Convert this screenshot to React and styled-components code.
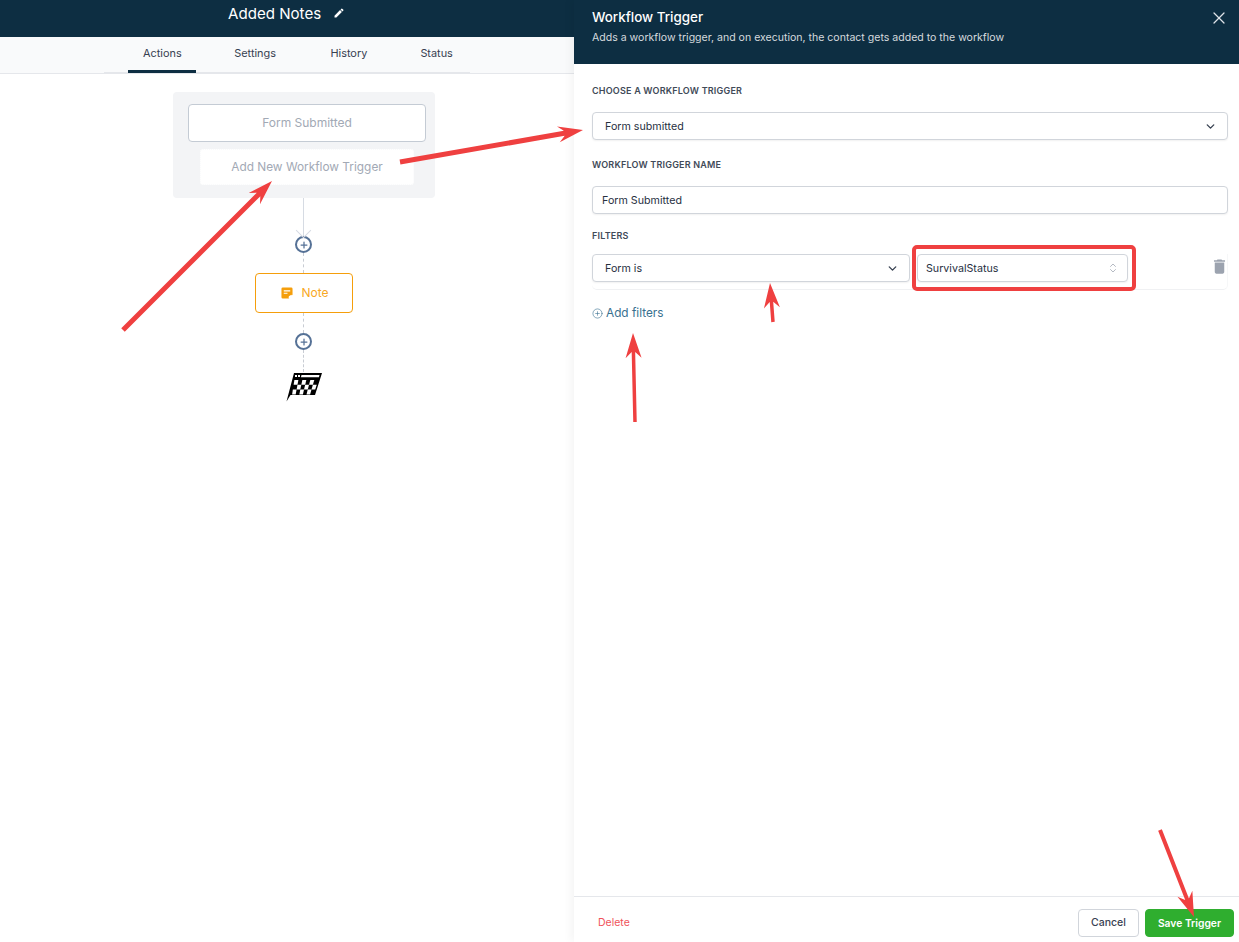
import React from "react";
import styled, { createGlobalStyle } from "styled-components";
import { MdEdit, MdDelete } from "react-icons/md";
import { X, ChevronDown, ChevronsUpDown, Plus, CirclePlus } from "lucide-react";

const Global = createGlobalStyle`
  html, body { margin: 0; padding: 0; background: #fff; }
  * { box-sizing: border-box; }
  body { font-family: Inter, "Liberation Sans", sans-serif; }
`;

const Page = styled.div`
  position: relative;
  display: flex;
  width: 1239px;
  height: 942px;
  overflow: hidden;
  background: #fff;
`;

const Builder = styled.div`
  width: 574px;
  flex: none;
  display: flex;
  flex-direction: column;
`;

const TopBar = styled.header`
  height: 37px;
  background: #0d2e42;
  display: flex;
  align-items: flex-start;
  padding: 5px 0 0 228px;
  gap: 12px;
  color: #fff;
`;

const WorkflowName = styled.h1`
  margin: 0;
  font-size: 15.1px;
  line-height: 18px;
  font-weight: 400;
  color: #fff;
`;

const EditIcon = styled(MdEdit)`
  width: 12px;
  height: 12px;
  margin-top: 2px;
  color: #fff;
`;

const TabBar = styled.nav`
  height: 37px;
  background: #f9fafb;
  border-bottom: 1px solid #e5e7eb;
  display: flex;
  justify-content: center;
`;

const TabTrack = styled.div`
  width: 366px;
  display: flex;
  padding-left: 24px;
  border-bottom: 1px solid #e5e7eb;
`;

const Tab = styled.a`
  width: ${(p) => p.$w}px;
  margin-right: ${(p) => p.$gap || 0}px;
  height: 36px;
  display: flex;
  align-items: center;
  justify-content: center;
  font-size: 10.9px;
  font-weight: 400;
  padding: 0 0 2px 1px;
  color: #374151;
  border-bottom: 3px solid ${(p) => (p.$active ? "#0d2e42" : "transparent")};
`;

const Canvas = styled.main`
  flex: 1;
  display: flex;
  flex-direction: column;
  align-items: center;
  padding: 18px 0 0 33px;
`;

const TriggerCard = styled.section`
  width: 262px;
  height: 106px;
  margin-left: 1px;
  background: #f3f4f6;
  border-radius: 4px;
  padding: 12px 9px 0 15px;
  display: flex;
  flex-direction: column;
  align-items: stretch;
`;

const TriggerBox = styled.div`
  height: 38px;
  padding-bottom: 2px;
  background: #fff;
  border: 1px solid #c4cbd4;
  border-radius: 4px;
  display: flex;
  align-items: center;
  justify-content: center;
  font-size: 12px;
  color: #a2a9b5;
`;

const AddTrigger = styled.div`
  height: 36px;
  margin: 7px 12px 0 12px;
  background: #fff;
  border: 1px dotted #f9fafb;
  border-radius: 3px;
  display: flex;
  align-items: center;
  justify-content: center;
  font-size: 11.85px;
  color: #a2a9b5;
`;

const SolidLine = styled.div`
  position: relative;
  width: 1px;
  height: 38px;
  background: #d6dbe3;
  &::after {
    content: "";
    position: absolute;
    left: -5px;
    bottom: 0;
    width: 10px;
    height: 10px;
    border-right: 1px solid #d6dbe3;
    border-bottom: 1px solid #d6dbe3;
    transform: rotate(45deg);
  }
`;

const DashedLine = styled.div`
  width: 0;
  height: ${(p) => p.$h}px;
  border-left: 1px dashed #c8ccd3;
`;

const AddStep = styled.button`
  width: 17px;
  height: 17px;
  padding: 0;
  flex: none;
  border-radius: 50%;
  border: 2px solid #557196;
  background: #fff;
  display: flex;
  align-items: center;
  justify-content: center;
  color: #557196;
`;

const NoteNode = styled.div`
  width: 98px;
  height: 40px;
  margin-left: 1px;
  padding: 0 0 1px 2px;
  border: 1px solid #f59e0b;
  border-radius: 4px;
  background: #fff;
  display: flex;
  align-items: center;
  justify-content: center;
  gap: 8px;
  font-size: 12px;
  color: #f8a825;
`;

const Panel = styled.aside`
  flex: 1;
  display: flex;
  flex-direction: column;
  background: #fff;
  box-shadow: -4px 0 8px rgba(0, 0, 0, 0.04);
  z-index: 1;
`;

const PanelHead = styled.header`
  height: 64px;
  flex: none;
  background: #0d2e42;
  display: flex;
  justify-content: space-between;
  padding: 9px 10px 0 18px;
`;

const PanelTitle = styled.h2`
  margin: 0;
  font-size: 13.4px;
  line-height: 17px;
  font-weight: 500;
  color: #fff;
`;

const PanelSub = styled.p`
  margin: 5px 0 0;
  font-size: 10.55px;
  line-height: 14px;
  color: #d5dade;
`;

const CloseIcon = styled(X)`
  width: 20px;
  height: 20px;
  margin-top: -1px;
  stroke-width: 1.5;
  color: #dfe3e8;
`;

const PanelBody = styled.div`
  flex: 1;
  padding: 21px 11px 0 18px;
  display: flex;
  flex-direction: column;
`;

const FieldLabel = styled.label`
  display: block;
  font-size: 9px;
  line-height: 12px;
  font-weight: 600;
  letter-spacing: 0.2px;
  color: #414a58;
  margin-bottom: ${(p) => p.$mb}px;
`;

const Control = styled.div`
  height: 28px;
  width: ${(p) => (p.$w ? p.$w + "px" : "100%")};
  flex: none;
  background: #fff;
  border: 1px solid #d1d5db;
  border-radius: 4px;
  box-shadow: 0 1px 2px rgba(0, 0, 0, 0.06);
  display: flex;
  align-items: center;
  justify-content: space-between;
  padding: 0 ${(p) => p.$pr ?? 10}px 0 ${(p) => p.$pl ?? 12}px;
  font-size: 10.7px;
  color: #27303f;
  margin-bottom: ${(p) => p.$mb || 0}px;
`;

const Chevron = styled(ChevronDown)`
  width: 13px;
  height: 13px;
  stroke-width: 2.5;
  color: #374151;
`;

const UpDown = styled(ChevronsUpDown)`
  width: 12px;
  height: 14px;
  stroke-width: 1.5;
  color: #9ca3af;
`;

const FilterRow = styled.div`
  display: flex;
  align-items: flex-start;
  height: 36px;
  border-bottom: 1px solid #f0f1f3;
  border-right: 1px solid #f6f7f8;
  border-radius: 0 0 5px 5px;
  gap: 7px;
`;

const TrashButton = styled(MdDelete)`
  width: 19px;
  height: 19px;
  margin: 3px -2px 0 auto;
  flex: none;
  color: #9ca3af;
`;

const AddFilter = styled.a`
  display: flex;
  align-items: center;
  gap: 3px;
  margin-top: 16px;
  font-size: 11.8px;
  line-height: 14px;
  color: #38708f;
`;

const PanelFoot = styled.footer`
  height: 46px;
  flex: none;
  border-top: 1px solid #e5e7eb;
  display: flex;
  align-items: center;
  justify-content: space-between;
  padding: 6px 5px 0 24px;
`;

const DeleteLink = styled.a`
  font-size: 10.5px;
  color: #f0525a;
`;

const FootActions = styled.div`
  display: flex;
  gap: 6px;
`;

const FootButton = styled.button`
  height: 28px;
  width: ${(p) => p.$w}px;
  border-radius: 4px;
  padding: 0;
  font: ${(p) => (p.$primary ? 600 : 500)} ${(p) => (p.$primary ? 10.3 : 10.5)}px Inter, sans-serif;
  color: ${(p) => (p.$primary ? "#fff" : "#374151")};
  background: ${(p) => (p.$primary ? "#2fae2f" : "#fff")};
  border: 1px solid ${(p) => (p.$primary ? "#2fae2f" : "#d1d5db")};
`;

const FlagGraphic = styled.svg`
  flex: none;
  margin-left: 1px;
`;

const Overlay = styled.svg`
  position: absolute;
  left: 0;
  top: 0;
  z-index: 5;
  pointer-events: none;
`;

const ARROW_RED = "#ef4040";

function Arrow({ x1, y1, x2, y2, w = 4 }) {
  const dx = x2 - x1;
  const dy = y2 - y1;
  const len = Math.hypot(dx, dy);
  const ux = dx / len;
  const uy = dy / len;
  const nx = -uy;
  const ny = ux;
  const hl = 25;
  const hw = 8;
  const notch = 19;
  const pt = (a, b) => `${x1 + ux * a + nx * b},${y1 + uy * a + ny * b}`;
  const points = [
    pt(0, -w / 2),
    pt(len - notch, -w / 2),
    pt(len - hl, -hw),
    pt(len, 0),
    pt(len - hl, hw),
    pt(len - notch, w / 2),
    pt(0, w / 2),
  ].join(" ");
  return <polygon points={points} fill={ARROW_RED} />;
}

function NoteIcon() {
  return (
    <svg width="12" height="12" viewBox="0 0 13 13">
      <path d="M2 0.5h9a1.5 1.5 0 0 1 1.5 1.5v6.5l-4 4H2A1.5 1.5 0 0 1 .5 11V2A1.5 1.5 0 0 1 2 .5z" fill="#f59e0b" />
      <path d="M3 4.2h7M3 6.7h4" stroke="#fff" strokeWidth="1.1" />
      <path d="M8.2 12.2l.3-2.2 2.7-1.5 1 1.2-2.4 2.2z" fill="#fff" />
    </svg>
  );
}

function FlagIcon() {
  const edge = (y) => {
    const t = (y - 1) / 22;
    return [8 - 3.5 * t, 36 - 7 * t];
  };
  const cell = (r, c) => {
    const y0 = 8 + r * 4.8;
    const y1 = y0 + 4.8;
    const at = (y, k) => {
      const [l, rt] = edge(y);
      const w = (rt - l - 3) / 6;
      return l + 1.5 + k * w;
    };
    return `${at(y0, c)},${y0} ${at(y0, c + 1)},${y0} ${at(y1, c + 1)},${y1} ${at(y1, c)},${y1}`;
  };
  const cells = [];
  for (let r = 0; r < 3; r++) {
    for (let c = 0; c < 6; c++) {
      if ((r + c) % 2 === 0) cells.push(<polygon key={`${r}-${c}`} points={cell(r, c)} fill="#fff" />);
    }
  }
  return (
    <FlagGraphic width="37" height="30" viewBox="0 0 37 30">
      <path d="M8 1 L36 1 L29 23 L4.5 23 L0.5 29.5 Z" fill="#000" />
      <path d="M15.5 3h18l-.6 2.2H14.9z" fill="#fff" />
      <rect x="9" y="3" width="2" height="2" fill="#fff" />
      <rect x="12" y="3" width="2" height="2" fill="#fff" />
      {cells}
    </FlagGraphic>
  );
}

export default function App() {
  return (
    <Page>
      <Global />
      <Builder>
        <TopBar>
          <WorkflowName>Added Notes</WorkflowName>
          <EditIcon />
        </TopBar>
        <TabBar>
          <TabTrack>
            <Tab $w={68} $gap={25} $active>Actions</Tab>
            <Tab $w={68} $gap={26}>Settings</Tab>
            <Tab $w={68} $gap={20}>History</Tab>
            <Tab $w={68}>Status</Tab>
          </TabTrack>
        </TabBar>
        <Canvas>
          <TriggerCard>
            <TriggerBox>Form Submitted</TriggerBox>
            <AddTrigger>Add New Workflow Trigger</AddTrigger>
          </TriggerCard>
          <SolidLine />
          <AddStep><Plus size={10} strokeWidth={3} /></AddStep>
          <DashedLine $h={20} />
          <NoteNode><NoteIcon />Note</NoteNode>
          <DashedLine $h={20} />
          <AddStep><Plus size={10} strokeWidth={3} /></AddStep>
          <DashedLine $h={22} />
          <FlagIcon />
        </Canvas>
      </Builder>
      <Panel>
        <PanelHead>
          <div>
            <PanelTitle>Workflow Trigger</PanelTitle>
            <PanelSub>Adds a workflow trigger, and on execution, the contact gets added to the workflow</PanelSub>
          </div>
          <CloseIcon />
        </PanelHead>
        <PanelBody>
          <FieldLabel $mb={15}>CHOOSE A WORKFLOW TRIGGER</FieldLabel>
          <Control $mb={19}>Form submitted<Chevron /></Control>
          <FieldLabel $mb={15}>WORKFLOW TRIGGER NAME</FieldLabel>
          <Control $pl={9} $mb={16}>Form Submitted</Control>
          <FieldLabel $mb={12}>FILTERS</FieldLabel>
          <FilterRow>
            <Control $w={318}>Form is<Chevron /></Control>
            <Control $w={211} $pl={8} $pr={8}>SurvivalStatus<UpDown /></Control>
            <TrashButton />
          </FilterRow>
          <AddFilter><CirclePlus size={11} strokeWidth={1.3} />Add filters</AddFilter>
        </PanelBody>
        <PanelFoot>
          <DeleteLink>Delete</DeleteLink>
          <FootActions>
            <FootButton $w={61}>Cancel</FootButton>
            <FootButton $w={89} $primary>Save Trigger</FootButton>
          </FootActions>
        </PanelFoot>
      </Panel>
      <Overlay width="1239" height="942" viewBox="0 0 1239 942">
        <Arrow x1={123} y1={330} x2={272} y2={181} w={5} />
        <Arrow x1={400} y1={162} x2={583} y2={130} w={5} />
        <Arrow x1={773} y1={322} x2={770} y2={283} w={3.5} />
        <Arrow x1={635} y1={422} x2={633} y2={333} w={3.5} />
        <Arrow x1={1160} y1={830} x2={1194} y2={917} w={4} />
        <rect x="914" y="247" width="220" height="42" rx="3" fill="none" stroke={ARROW_RED} strokeWidth="4" />
      </Overlay>
    </Page>
  );
}
